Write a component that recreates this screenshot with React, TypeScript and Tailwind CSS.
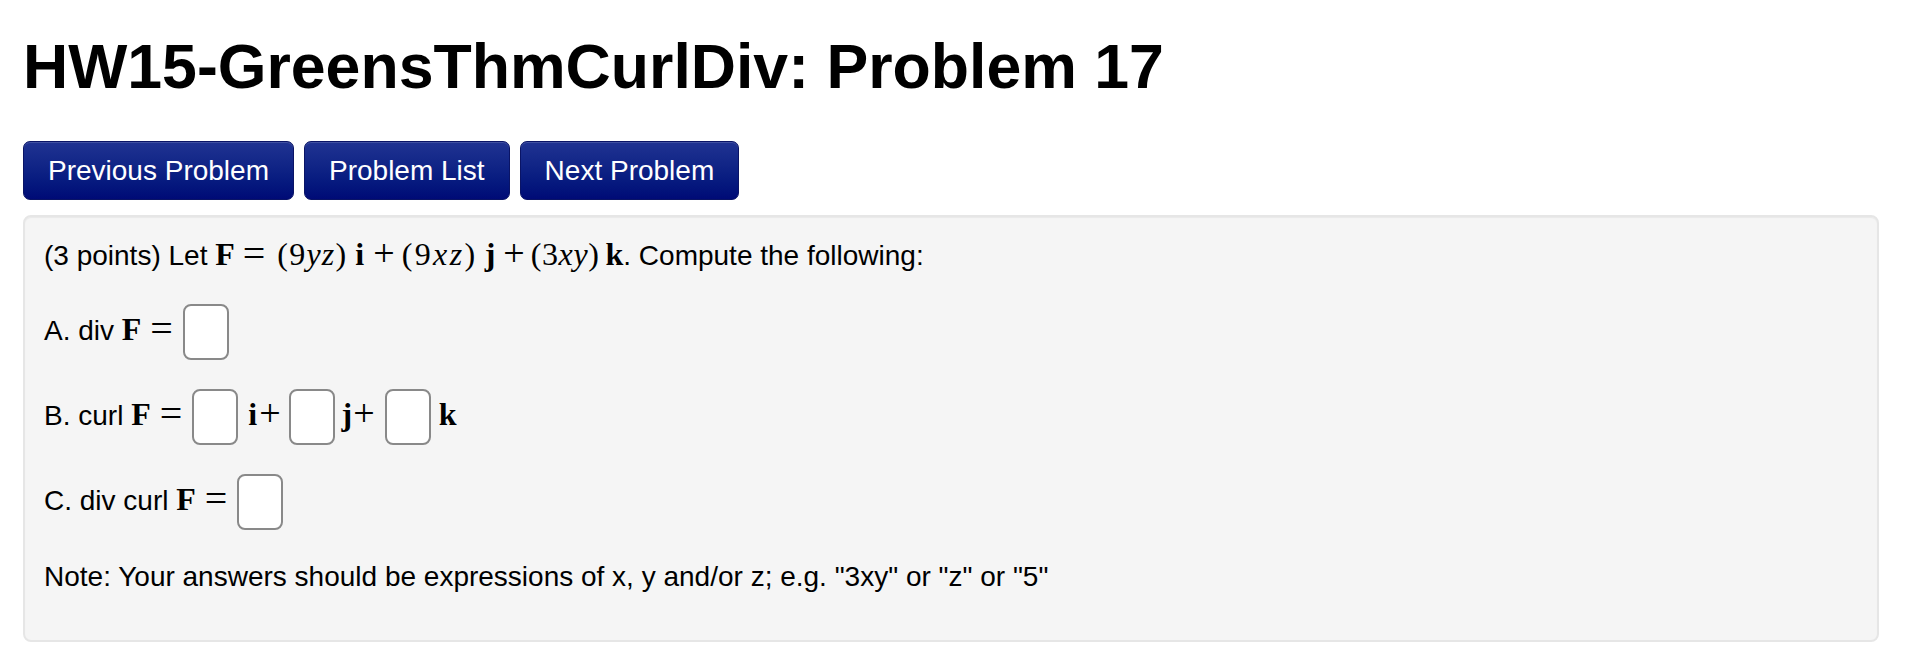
import React from 'react';

const sans = { fontFamily: '"Liberation Sans", Arial, Helvetica, sans-serif' };

function Bold({ children, className = '' }: { children: React.ReactNode; className?: string }) {
  return (
    <span className={`font-['Liberation_Serif',serif] font-bold text-[32px] leading-[20px] ${className}`}>
      {children}
    </span>
  );
}

// equals / plus signs: a bit larger than the letters, nudged back down to the math axis
function Op({ children, className = '' }: { children: React.ReactNode; className?: string }) {
  return (
    <span className={`inline-block font-['Liberation_Serif',serif] leading-[20px] ${className}`}>{children}</span>
  );
}

function Group({ a, b, c, className = '' }: { a: string; b: string; c: string; className?: string }) {
  return (
    <span className={`font-['Liberation_Serif',serif] text-[32px] leading-[20px] ${className}`}>
      ({a}
      <i>{b}</i>
      <i>{c}</i>)
    </span>
  );
}

function AnswerBox({ className = '' }: { className?: string }) {
  return (
    <input
      type="text"
      aria-label="answer"
      className={`w-[46px] h-[56px] shrink-0 bg-white border-2 border-[#898989] rounded-[8px] outline-none ${className}`}
    />
  );
}

const NavButton = ({ label }: { label: string }) => (
  <button className="h-[59px] px-[24px] flex items-center text-white text-[28px] rounded-[7px] border border-[#0a1466] bg-linear-to-b from-[#203392] to-[#000a76] shadow-[inset_0_1px_0_rgba(255,255,255,0.15)]">
    {label}
  </button>
);

export default function App() {
  return (
    <div className="min-h-[667px] bg-white text-black pl-[23px]" style={sans}>
      {/* Title */}
      <h1 className="pt-[35px] text-[62.6px] leading-[63px] font-bold">HW15-GreensThmCurlDiv: Problem 17</h1>

      {/* Navigation */}
      <div className="mt-[43px] flex gap-[10px]">
        <NavButton label="Previous Problem" />
        <NavButton label="Problem List" />
        <NavButton label="Next Problem" />
      </div>

      {/* Problem body */}
      <div className="mt-[15px] w-[1856px] h-[427px] bg-[#f5f5f5] border-2 border-[#e6e6e6] rounded-[8px] pt-[19px] pl-[19px] shadow-[inset_0_1px_1px_rgba(0,0,0,0.05)] text-[28px]">
        <div className="leading-[40px] whitespace-nowrap">
          (3 points) Let <Bold>F</Bold>
          <Op className="text-[40px] ml-[8px] translate-y-[2px]">=</Op>
          <Group a="9" b="y" c="z" className="ml-[12px] tracking-[1.2px]" />
          <Bold className="ml-[8px]">i</Bold>
          <Op className="text-[38px] ml-[9px] translate-y-[1px]">+</Op>
          <Group a="9" b="x" c="z" className="ml-[7px] tracking-[2.4px]" />
          <Bold className="ml-[7px]">j</Bold>
          <Op className="text-[38px] ml-[8px] translate-y-[1px]">+</Op>
          <Group a="3" b="x" c="y" className="ml-[6px] tracking-[0.6px]" />
          <Bold className="ml-[6px]">k</Bold>. Compute the following:
        </div>

        {/* A */}
        <div className="mt-[28px] flex items-start">
          <span className="mt-[13px] leading-[28px] whitespace-pre">
            A. div <Bold>F</Bold>
            <Op className="text-[40px] ml-[9px] translate-y-[2px]">=</Op>
          </span>
          <AnswerBox className="ml-[10px]" />
        </div>

        {/* B */}
        <div className="mt-[29px] flex items-start">
          <span className="mt-[13px] leading-[28px] whitespace-pre">
            B. curl <Bold>F</Bold>
            <Op className="text-[40px] ml-[9px] translate-y-[2px]">=</Op>
          </span>
          <AnswerBox className="ml-[10px]" />
          <span className="mt-[13px] leading-[28px] ml-[10px]">
            <Bold>i</Bold>
            <Op className="text-[38px] ml-[2px] translate-y-[1px]">+</Op>
          </span>
          <AnswerBox className="ml-[8px]" />
          <span className="mt-[13px] leading-[28px] ml-[7px]">
            <Bold>j</Bold>
            <Op className="text-[38px] ml-[1px] translate-y-[1px]">+</Op>
          </span>
          <AnswerBox className="ml-[10px]" />
          <span className="mt-[13px] leading-[28px] ml-[8px]">
            <Bold>k</Bold>
          </span>
        </div>

        {/* C */}
        <div className="mt-[29px] flex items-start">
          <span className="mt-[13px] leading-[28px] whitespace-pre">
            C. div curl <Bold>F</Bold>
            <Op className="text-[40px] ml-[9px] translate-y-[2px]">=</Op>
          </span>
          <AnswerBox className="ml-[10px]" />
        </div>

        <div className="mt-[27px] leading-[40px] whitespace-nowrap">
          Note: Your answers should be expressions of x, y and/or z; e.g. "3xy" or "z" or "5"
        </div>
      </div>
    </div>
  );
}
